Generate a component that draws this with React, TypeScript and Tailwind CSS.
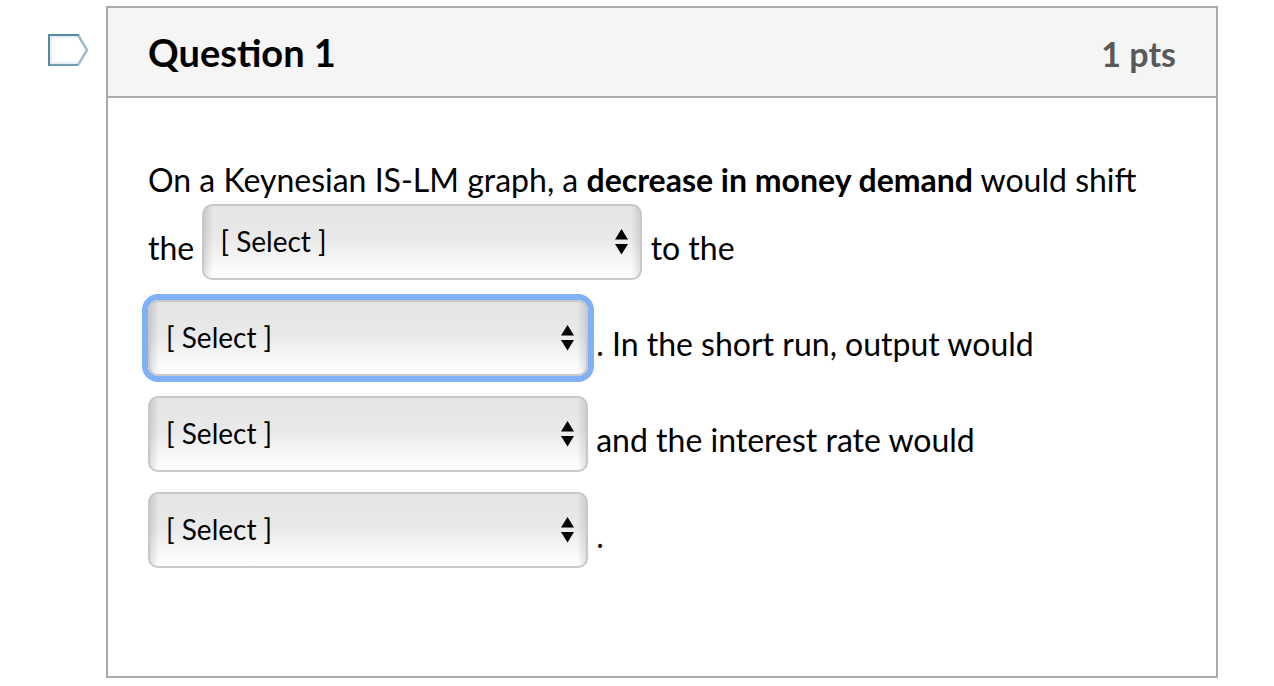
import React from 'react'

const selectFill =
  'bg-[linear-gradient(to_right,rgba(0,0,0,0.15),transparent_11px,transparent_calc(100%-11px),rgba(0,0,0,0.13)),linear-gradient(to_bottom,#e5e5e5,#e9e9e9_45%,#ffffff_95%)]'

function BlankSelect({ label, active = false }: { label: string; active?: boolean }) {
  return (
    <span className="relative mb-5 inline-block w-[440px] max-w-full align-middle">
      <select
        aria-label={label}
        className={`block h-[76px] w-full appearance-none rounded-[10px] border-2 border-[#c8c8c8] bg-origin-border pr-10 pb-[2px] pl-4 text-[28px] text-black outline-none ${selectFill} ${
          active ? 'ring-6 ring-[#7fb0f8]' : ''
        }`}
      >
        <option>[ Select ]</option>
      </select>
      <svg
        className="pointer-events-none absolute top-[25px] right-[14px]"
        width="13"
        height="26"
        viewBox="0 0 13 26"
        aria-hidden="true"
      >
        <path d="M6.5 0L13 10.5H0z" />
        <path d="M0 15h13L6.5 25.5z" />
      </svg>
    </span>
  )
}

export default function App() {
  return (
    <main className="flex items-start bg-white pt-[6px] pr-14 pb-2 pl-12 font-['Lato','Liberation_Sans',sans-serif] text-black">
      <button type="button" aria-label="Flag question" className="mt-7 mr-[18px] shrink-0">
        <svg width="40" height="32" viewBox="0 0 40 32" fill="none" className="block">
          <path d="M30 1L39 16L30 31" stroke="#9dbccb" strokeWidth="2.5" />
          <path d="M30 31H1" stroke="#6f9db3" strokeWidth="2" />
          <path d="M1 32V1H31" stroke="#55899f" strokeWidth="2" />
          <path d="M3 30V3H29M3 29H29" stroke="#cfdee5" strokeWidth="1" />
        </svg>
      </button>

      <section className="min-w-0 flex-1 border-2 border-[#aaaaaa]">
        <header className="flex items-baseline justify-between border-b-2 border-[#aaaaaa] bg-[#f5f5f5] px-10 pt-5 pb-5">
          <h1 className="text-[38px] leading-[48px] font-bold">Question 1</h1>
          <span className="text-[34px] leading-[44px] font-bold text-[#595959]">1 pts</span>
        </header>

        <div className="px-10 pt-[58px] pb-[88px] text-[32px] leading-[48px]">
          <p>
            On a Keynesian IS-LM graph, a <strong>decrease in money demand</strong> would shift the{' '}
            <BlankSelect label="Curve that shifts" /> to the{' '}
            <BlankSelect label="Direction of the shift" active /> . In the short run, output would{' '}
            <BlankSelect label="Change in output" /> and the interest rate would{' '}
            <BlankSelect label="Change in the interest rate" /> .
          </p>
        </div>
      </section>
    </main>
  )
}
